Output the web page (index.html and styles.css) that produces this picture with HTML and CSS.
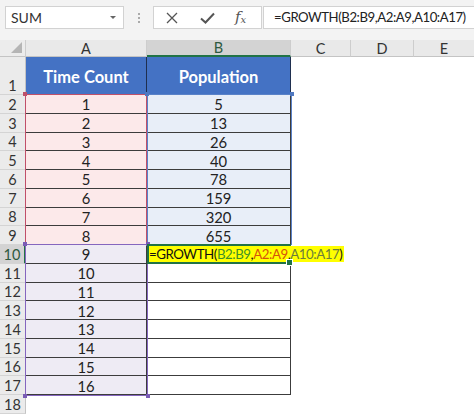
FILE: index.html
```html
<!DOCTYPE html>
<html>
<head>
<meta charset="utf-8">
<link rel="stylesheet" href="styles.css">
</head>
<body>
<div class="topbar">
  <div class="namebox"><span class="nb-text">SUM</span><span class="nb-arrow"></span></div>
  <div class="dots"><i></i><i></i><i></i></div>
  <div class="iconbox">
    <svg class="ic ic-x" width="12" height="12" viewBox="0 0 12 12"><path d="M1 1 L11 11 M11 1 L1 11" stroke="#555" stroke-width="1.3" fill="none"/></svg>
    <svg class="ic ic-check" width="15" height="12" viewBox="0 0 15 12"><path d="M1 6.5 L5.5 10.5 L14 1.5" stroke="#555" stroke-width="2" fill="none"/></svg>
    <span class="ic fx">f<sub>x</sub></span>
  </div>
  <div class="formulabox">=GROWTH(B2:B9,A2:A9,A10:A17)</div>
</div>
<div class="sheet">
  <div class="ch corner"><span class="tri"></span></div>
  <div class="ch">A</div>
  <div class="ch ch-active">B</div>
  <div class="ch">C</div>
  <div class="ch">D</div>
  <div class="ch last">E</div>

  <div class="rh rh1">1</div><div class="c hd">Time Count</div><div class="c hd">Population</div><div></div><div></div><div></div>

  <div class="rh">2</div><div class="c t pk">1</div><div class="c t bl">5</div><div></div><div></div><div></div>
  <div class="rh">3</div><div class="c t pk">2</div><div class="c t bl">13</div><div></div><div></div><div></div>
  <div class="rh">4</div><div class="c t pk">3</div><div class="c t bl">26</div><div></div><div></div><div></div>
  <div class="rh">5</div><div class="c t pk">4</div><div class="c t bl">40</div><div></div><div></div><div></div>
  <div class="rh">6</div><div class="c t pk">5</div><div class="c t bl">78</div><div></div><div></div><div></div>
  <div class="rh">7</div><div class="c t pk">6</div><div class="c t bl">159</div><div></div><div></div><div></div>
  <div class="rh">8</div><div class="c t pk">7</div><div class="c t bl">320</div><div></div><div></div><div></div>
  <div class="rh">9</div><div class="c t pk">8</div><div class="c t bl">655</div><div></div><div></div><div></div>
  <div class="rh rh-active">10</div><div class="c t pu">9</div><div class="c t active"><span class="fml">=GROWTH(<span class="r1">B2:B9</span>,<span class="r2">A2:A9</span>,<span class="r3">A10:A17</span>)</span><span class="handle"></span></div><div></div><div></div><div></div>
  <div class="rh">11</div><div class="c t pu">10</div><div class="c t"></div><div></div><div></div><div></div>
  <div class="rh">12</div><div class="c t pu">11</div><div class="c t"></div><div></div><div></div><div></div>
  <div class="rh">13</div><div class="c t pu">12</div><div class="c t"></div><div></div><div></div><div></div>
  <div class="rh">14</div><div class="c t pu">13</div><div class="c t"></div><div></div><div></div><div></div>
  <div class="rh">15</div><div class="c t pu">14</div><div class="c t"></div><div></div><div></div><div></div>
  <div class="rh">16</div><div class="c t pu">15</div><div class="c t"></div><div></div><div></div><div></div>
  <div class="rh">17</div><div class="c t pu">16</div><div class="c t"></div><div></div><div></div><div></div>
  <div class="rh">18</div><div></div><div></div><div></div><div></div><div></div>

  <div class="rng rng-a"><span class="sq tl"></span><span class="sq tr"></span></div>
  <div class="rng rng-b"><span class="sq tl"></span><span class="sq tr"></span></div>
  <div class="rng rng-c"><span class="sq tl"></span><span class="sq tr"></span><span class="sq bl"></span><span class="sq br"></span></div>
</div>
</body>
</html>
```
FILE: styles.css
```css
html, body {
  margin: 0;
  padding: 0;
  background: #fff;
  overflow: hidden;
}
body {
  width: 474px;
  height: 414px;
  font-family: Lato, "Open Sans", sans-serif;
  color: #222;
}
.topbar {
  height: 40px;
  box-sizing: border-box;
  background: #f3f3f3;
  display: flex;
  align-items: flex-start;
  padding-top: 6px;
  padding-left: 5px;
}
.namebox {
  flex: 0 0 119px;
  height: 23px;
  box-sizing: border-box;
  background: #fff;
  border: 1px solid #d2d2d2;
  display: flex;
  align-items: center;
  justify-content: space-between;
  padding: 0 7px 0 5px;
  font-size: 14px;
  color: #333;
}
.nb-arrow {
  width: 0;
  height: 0;
  border-left: 3px solid transparent;
  border-right: 3px solid transparent;
  border-top: 3px solid #666;
}
.dots {
  flex: 0 0 29px;
  height: 23px;
  display: flex;
  flex-direction: column;
  align-items: center;
  justify-content: center;
  gap: 2px;
}
.dots i {
  display: block;
  width: 2px;
  height: 2px;
  background: #aaa;
}
.iconbox {
  flex: 0 0 109px;
  height: 23px;
  box-sizing: border-box;
  background: #fff;
  border: 1px solid #d2d2d2;
  display: flex;
  align-items: center;
  padding-left: 12px;
}
.ic-x { margin-right: 22px; }
.ic-check { margin-right: 20px; }
.fx {
  font-family: "DejaVu Serif", "Liberation Serif", serif;
  font-style: italic;
  font-size: 15px;
  color: #555;
  line-height: 1;
}
.fx sub {
  font-size: 10px;
  vertical-align: -1px;
}
.formulabox {
  flex: 1 1 auto;
  min-width: 0;
  height: 23px;
  box-sizing: border-box;
  margin-left: 1px;
  background: #fff;
  border: 1px solid #d2d2d2;
  border-right: none;
  padding-left: 10px;
  font-size: 13.2px;
  letter-spacing: -0.45px;
  line-height: 21px;
  color: #222;
  white-space: nowrap;
  overflow: hidden;
}
.sheet {
  position: relative;
  display: grid;
  grid-template-columns: 26px 121px 144px 60px 63px 60px;
  grid-template-rows: 17px 38px repeat(17, 18.75px);
}
.ch {
  background: #e9e9e9;
  border-right: 1px solid #cdcdcd;
  border-bottom: 1px solid #c4c4c4;
  box-sizing: border-box;
  display: flex;
  align-items: center;
  justify-content: center;
  font-size: 14.5px;
  color: #333;
}
.ch.last { border-right: none; }
.corner {
  position: relative;
  background: #ececec;
}
.tri {
  position: absolute;
  right: 3px;
  bottom: 3px;
  width: 0;
  height: 0;
  border-left: 11px solid transparent;
  border-bottom: 11px solid #b5b5b5;
}
.ch-active {
  background: #d3d3d3;
  color: #2d5a40;
  border-bottom: 2px solid #217346;
}
.rh {
  background: #ebebeb;
  border-right: 1px solid #c4c4c4;
  border-bottom: 1px solid #d4d4d4;
  box-sizing: border-box;
  display: flex;
  align-items: flex-end;
  justify-content: center;
  font-size: 14.5px;
  color: #333;
  line-height: 17px;
}
.rh-active {
  background: #d3d3d3;
  color: #2d5a40;
  border-right: 2px solid #217346;
}
.c {
  box-sizing: border-box;
  display: flex;
  align-items: center;
  justify-content: center;
  border-right: 1px solid #3c3c3c;
  border-bottom: 1px solid #3c3c3c;
}
.hd {
  background: #4472c4;
  color: #fff;
  font-weight: 700;
  font-size: 16.5px;
  padding-top: 2px;
  border-right-color: #1f2f4f;
  border-bottom: none;
}
.t {
  font-size: 14.8px;
  color: #222;
  padding-top: 1px;
}
.pk { background: #fce9ea; }
.bl { background: #e8eef8; }
.pu { background: #eeebf4; }
.active {
  position: relative;
  z-index: 3;
  justify-content: flex-start;
  border: 2px solid #217346;
  margin: -1px 0 0 0;
  padding: 0;
  overflow: visible;
}
.fml {
  background: #ffff00;
  align-self: stretch;
  display: flex;
  align-items: center;
  white-space: nowrap;
  font-size: 13.3px;
  letter-spacing: -0.45px;
  color: #111;
  padding-right: 2px;
}
.r1 { color: #3f8f2a; }
.r2 { color: #d5520c; }
.r3 { color: #6c7d3c; }
.handle {
  position: absolute;
  right: -4px;
  bottom: -4px;
  width: 5px;
  height: 5px;
  background: #217346;
  border: 1px solid #fff;
}
.rng {
  position: absolute;
  z-index: 2;
  box-sizing: border-box;
  border: 1.5px solid;
  top: -1px;
  bottom: 0;
  left: -1px;
  right: -1px;
  pointer-events: none;
}
.rng-a { grid-column: 2 / 3; grid-row: 3 / 11; border-color: #c0506a; right: 0; }
.rng-b { grid-column: 3 / 4; grid-row: 3 / 11; border-color: #5a82c8; left: 0; }
.rng-c { grid-column: 2 / 3; grid-row: 11 / 19; border-color: #8566be; bottom: -1px; }
.sq {
  position: absolute;
  width: 4px;
  height: 4px;
}
.rng-a .sq { background: #c0506a; }
.rng-b .sq { background: #4f78c0; }
.rng-c .sq { background: #7a5cb5; }
.sq.tl { left: -3px; top: -3px; }
.sq.tr { right: -3px; top: -3px; }
.sq.bl { left: -3px; bottom: -3px; }
.sq.br { right: -3px; bottom: -3px; }
```
